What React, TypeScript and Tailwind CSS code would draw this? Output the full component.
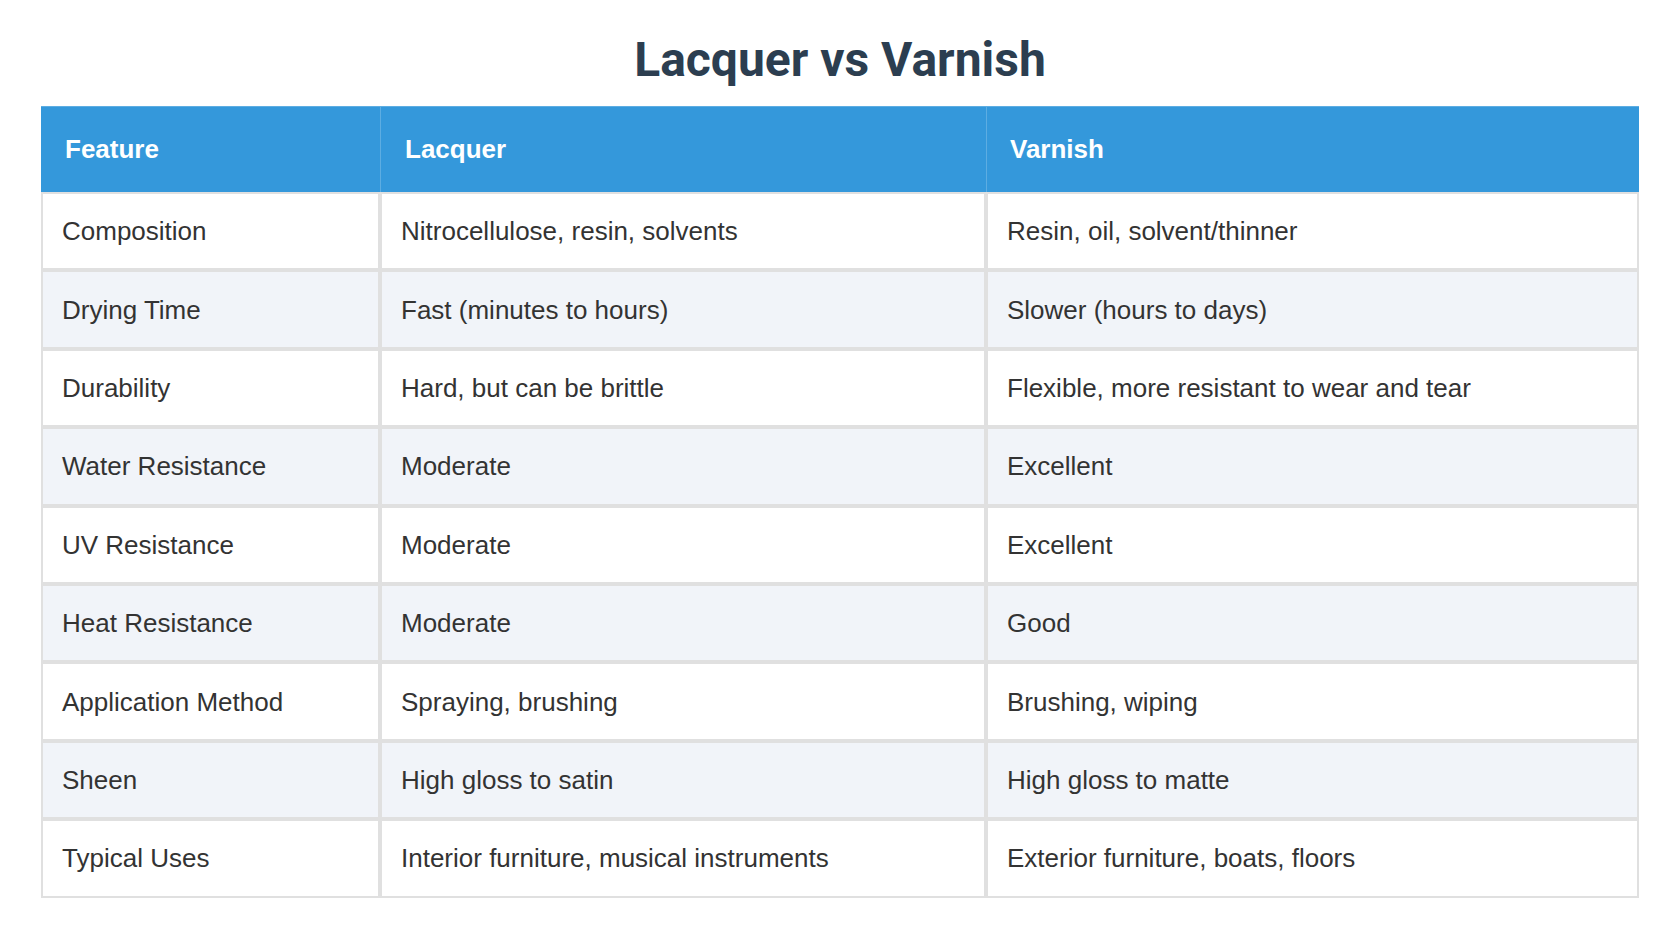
import React from "react";

const rows: [string, string, string][] = [
  ["Composition", "Nitrocellulose, resin, solvents", "Resin, oil, solvent/thinner"],
  ["Drying Time", "Fast (minutes to hours)", "Slower (hours to days)"],
  ["Durability", "Hard, but can be brittle", "Flexible, more resistant to wear and tear"],
  ["Water Resistance", "Moderate", "Excellent"],
  ["UV Resistance", "Moderate", "Excellent"],
  ["Heat Resistance", "Moderate", "Good"],
  ["Application Method", "Spraying, brushing", "Brushing, wiping"],
  ["Sheen", "High gloss to satin", "High gloss to matte"],
  ["Typical Uses", "Interior furniture, musical instruments", "Exterior furniture, boats, floors"],
];

export default function App() {
  return (
    <div className="min-h-[940px] w-[1680px] bg-white px-[41px] pt-[30px]">
      <h1 className="text-center text-[48px] font-bold leading-[60px] text-[#2c3e50] mb-[16px] [font-family:Roboto,'Liberation_Sans',sans-serif]">
        Lacquer vs Varnish
      </h1>
      <table className="w-[1598px] border-separate border-spacing-0 [font-family:'Liberation_Sans',Arial,sans-serif]">
        <colgroup>
          <col className="w-[339px]" />
          <col className="w-[606px]" />
          <col className="w-[653px]" />
        </colgroup>
        <thead>
          <tr>
            <th className="h-[86px] bg-[#3498db] border-t border-[#5dade2] pl-[24px] text-left text-[26px] font-bold text-white">
              Feature
            </th>
            <th className="h-[86px] bg-[#3498db] border-t border-l border-[#5dade2] pl-[24px] text-left text-[26px] font-bold text-white">
              Lacquer
            </th>
            <th className="h-[86px] bg-[#3498db] border-t border-l border-[#5dade2] pl-[23px] text-left text-[26px] font-bold text-white">
              Varnish
            </th>
          </tr>
        </thead>
        <tbody>
          {rows.map((r, i) => (
            <tr key={i} className={i % 2 === 1 ? "bg-[#f1f4f9]" : "bg-white"}>
              {r.map((c, j) => (
                <td
                  key={j}
                  className="h-[78.4px] border-2 border-[#e0e0e0] px-[19px] pt-[1px] pb-0 text-[26px] text-[#333333]"
                >
                  {c}
                </td>
              ))}
            </tr>
          ))}
        </tbody>
      </table>
    </div>
  );
}
